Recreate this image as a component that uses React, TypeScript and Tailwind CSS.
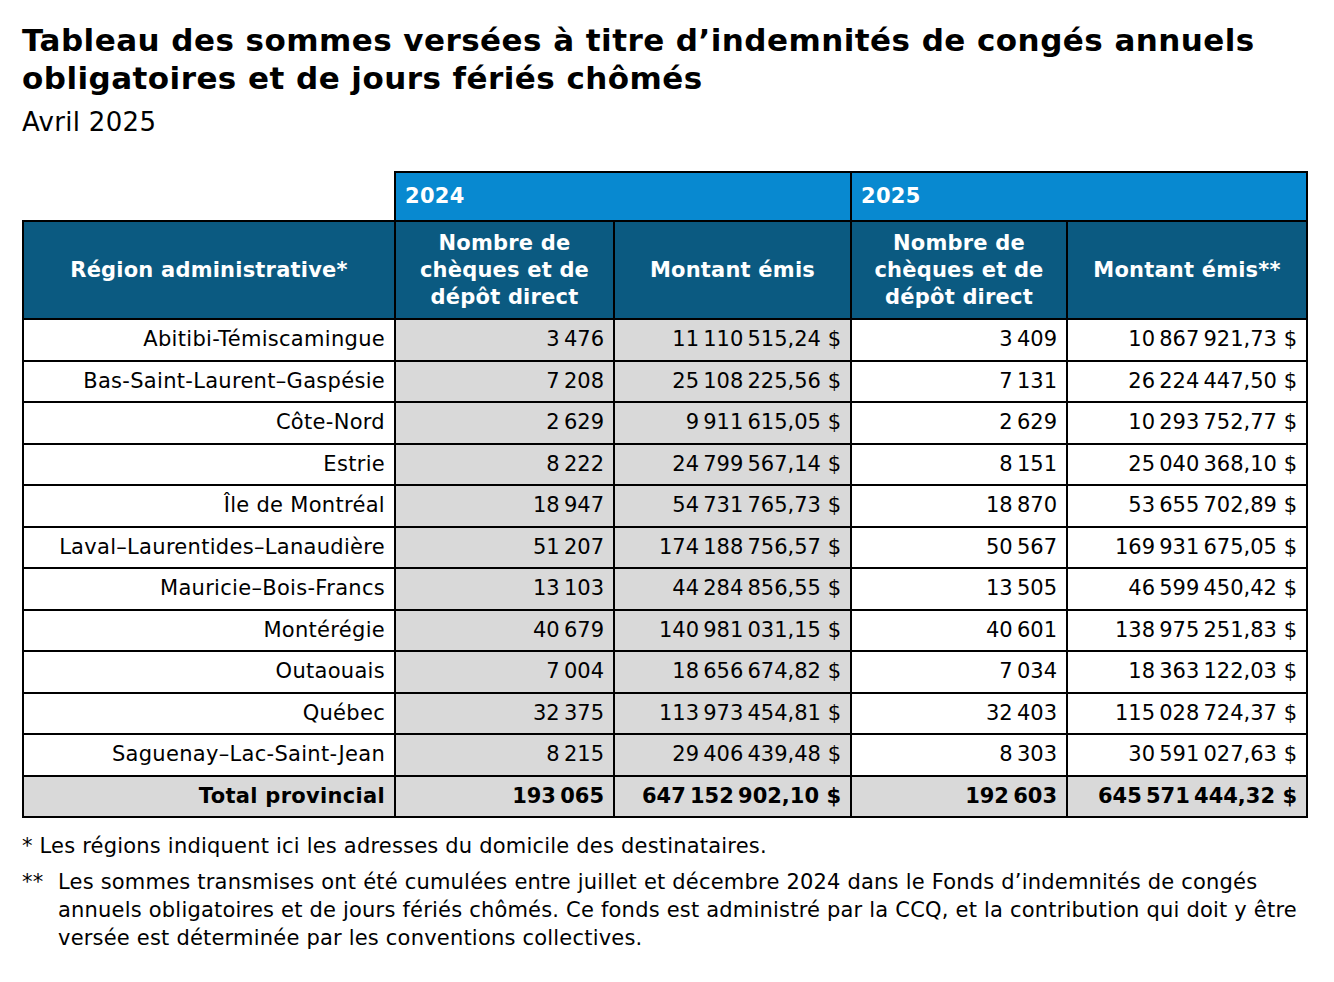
import React from "react"

interface Row {
    region: string
    nb2024: string
    montant2024: string
    nb2025: string
    montant2025: string
}

// espace fine insécable pour les milliers
const n = (s: string) => s.replace(/ (?=\d)/g, "\u202F")

const rows: Row[] = [
    { region: "Abitibi-Témiscamingue", nb2024: "3 476", montant2024: "11 110 515,24 $", nb2025: "3 409", montant2025: "10 867 921,73 $" },
    { region: "Bas-Saint-Laurent–Gaspésie", nb2024: "7 208", montant2024: "25 108 225,56 $", nb2025: "7 131", montant2025: "26 224 447,50 $" },
    { region: "Côte-Nord", nb2024: "2 629", montant2024: "9 911 615,05 $", nb2025: "2 629", montant2025: "10 293 752,77 $" },
    { region: "Estrie", nb2024: "8 222", montant2024: "24 799 567,14 $", nb2025: "8 151", montant2025: "25 040 368,10 $" },
    { region: "Île de Montréal", nb2024: "18 947", montant2024: "54 731 765,73 $", nb2025: "18 870", montant2025: "53 655 702,89 $" },
    { region: "Laval–Laurentides–Lanaudière", nb2024: "51 207", montant2024: "174 188 756,57 $", nb2025: "50 567", montant2025: "169 931 675,05 $" },
    { region: "Mauricie–Bois-Francs", nb2024: "13 103", montant2024: "44 284 856,55 $", nb2025: "13 505", montant2025: "46 599 450,42 $" },
    { region: "Montérégie", nb2024: "40 679", montant2024: "140 981 031,15 $", nb2025: "40 601", montant2025: "138 975 251,83 $" },
    { region: "Outaouais", nb2024: "7 004", montant2024: "18 656 674,82 $", nb2025: "7 034", montant2025: "18 363 122,03 $" },
    { region: "Québec", nb2024: "32 375", montant2024: "113 973 454,81 $", nb2025: "32 403", montant2025: "115 028 724,37 $" },
    { region: "Saguenay–Lac-Saint-Jean", nb2024: "8 215", montant2024: "29 406 439,48 $", nb2025: "8 303", montant2025: "30 591 027,63 $" },
]

const cell = "border-2 border-black h-[41.5px] px-[9px] text-right whitespace-nowrap"
const head = "border-2 border-black bg-[#0b5a81] text-white font-bold leading-[27px]"

export default function App() {
    return (
        <div className="min-h-screen bg-white text-black px-[22px] pt-[21px]" style={{ fontFamily: '"DejaVu Sans", Verdana, sans-serif' }}>
            <h1 className="text-[31px] font-bold leading-[38px] tracking-[0.45px]">
                Tableau des sommes versées à titre d’indemnités de congés annuels
                <br />
                obligatoires et de jours fériés chômés
            </h1>
            <p className="text-[26px] leading-[34px] mt-[8px] tracking-[0.3px]">Avril 2025</p>

            {/* Tableau */}
            <table className="mt-[32px] w-[1284px] border-collapse table-fixed text-[21px] tracking-[0.3px]">
                <colgroup>
                    <col className="w-[372px]" />
                    <col className="w-[219px]" />
                    <col className="w-[237px]" />
                    <col className="w-[216px]" />
                    <col className="w-[240px]" />
                </colgroup>
                <thead>
                    <tr className="h-[49px]">
                        <th className="border-r-2 border-b-2 border-black"></th>
                        <th colSpan={2} className="border-2 border-black bg-[#0889d0] text-white font-bold text-left px-[9px]">2024</th>
                        <th colSpan={2} className="border-2 border-black bg-[#0889d0] text-white font-bold text-left px-[9px]">2025</th>
                    </tr>
                    <tr className="h-[98px] tracking-[0.2px]">
                        <th className={head}>Région administrative*</th>
                        <th className={head}>Nombre de<br />chèques et de<br />dépôt direct</th>
                        <th className={head}>Montant émis</th>
                        <th className={head}>Nombre de<br />chèques et de<br />dépôt direct</th>
                        <th className={head}>Montant émis**</th>
                    </tr>
                </thead>
                <tbody>
                    {rows.map((r) => (
                        <tr key={r.region}>
                            <td className={`${cell} bg-white`}>{r.region}</td>
                            <td className={`${cell} bg-[#d9d9d9]`}>{n(r.nb2024)}</td>
                            <td className={`${cell} bg-[#d9d9d9]`}>{n(r.montant2024)}</td>
                            <td className={`${cell} bg-white`}>{n(r.nb2025)}</td>
                            <td className={`${cell} bg-white`}>{n(r.montant2025)}</td>
                        </tr>
                    ))}
                    <tr className="font-bold bg-[#d9d9d9]">
                        <td className={cell}>Total provincial</td>
                        <td className={cell}>{n("193 065")}</td>
                        <td className={cell}>{n("647 152 902,10 $")}</td>
                        <td className={cell}>{n("192 603")}</td>
                        <td className={cell}>{n("645 571 444,32 $")}</td>
                    </tr>
                </tbody>
            </table>

            {/* Notes */}
            <div className="mt-[14px] text-[21px] leading-[28px] tracking-[0.2px]">
                <p>* Les régions indiquent ici les adresses du domicile des destinataires.</p>
                <div className="flex mt-[8px]">
                    <span className="w-[36px] shrink-0">**</span>
                    <p className="w-[1250px]">
                        Les sommes transmises ont été cumulées entre juillet et décembre 2024 dans le Fonds d’indemnités de congés annuels obligatoires et de jours fériés chômés. Ce fonds est administré par la CCQ, et la contribution qui doit y être versée est déterminée par les conventions collectives.
                    </p>
                </div>
            </div>
        </div>
    )
}
